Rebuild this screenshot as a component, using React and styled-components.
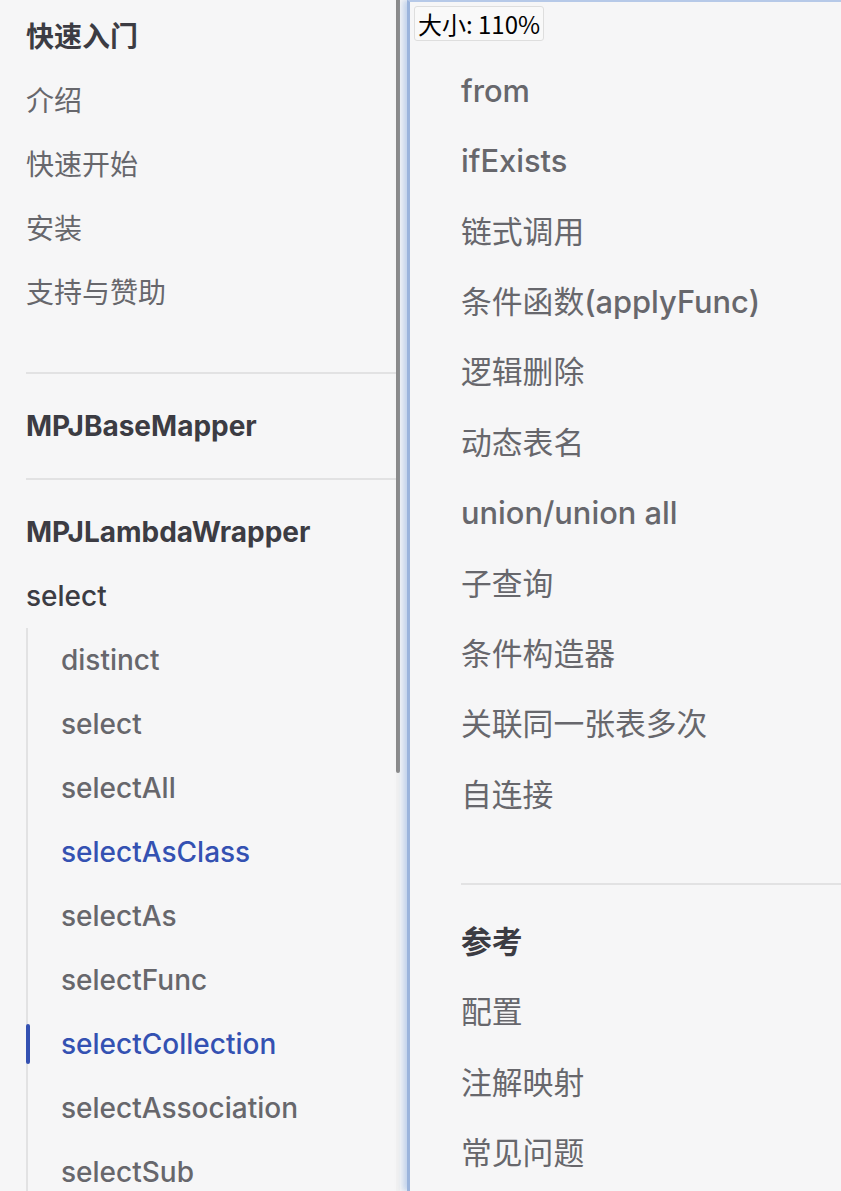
import React from "react";
import styled, { createGlobalStyle } from "styled-components";

const GlobalStyle = createGlobalStyle`
  html, body {
    margin: 0;
    padding: 0;
    background: #f6f6f7;
  }
  body {
    font-family: Inter, "Noto Sans CJK SC", sans-serif;
  }
`;

const quickStart = ["介绍", "快速开始", "安装", "支持与赞助"];

const selectChildren = [
  { text: "distinct" },
  { text: "select" },
  { text: "selectAll" },
  { text: "selectAsClass", highlight: true },
  { text: "selectAs" },
  { text: "selectFunc" },
  { text: "selectCollection", active: true },
  { text: "selectAssociation" },
  { text: "selectSub" },
];

const zoomedItems = [
  "from",
  "ifExists",
  "链式调用",
  "条件函数(applyFunc)",
  "逻辑删除",
  "动态表名",
  "union/union all",
  "子查询",
  "条件构造器",
  "关联同一张表多次",
  "自连接",
];

const referenceItems = ["配置", "注解映射", "常见问题"];

// the chinese glyphs render at regular weight, latin at medium
function Label({ text }) {
  const parts = text.split(/([\u4e00-\u9fff]+)/).filter(Boolean);
  return parts.map((p, i) => (/[\u4e00-\u9fff]/.test(p) ? <Han key={i}>{p}</Han> : <span key={i}>{p}</span>));
}

function App() {
  return (
    <>
      <GlobalStyle />
      <Page>
        <Sidebar>
          <Group pt="5px" pb="47px">
            <GroupTitle>快速入门</GroupTitle>
            {quickStart.map((t) => (
              <Item key={t}>
                <Label text={t} />
              </Item>
            ))}
          </Group>
          <Group divided pt="20px" pb="20px">
            <GroupTitle>MPJBaseMapper</GroupTitle>
          </Group>
          <Group divided pt="20px" pb="0px">
            <GroupTitle>MPJLambdaWrapper</GroupTitle>
            <Item strong>select</Item>
            <SubList>
              {selectChildren.map((c) => (
                <SubItem key={c.text} blue={c.highlight || c.active}>
                  {c.active && <Indicator />}
                  {c.text}
                </SubItem>
              ))}
            </SubList>
          </Group>
        </Sidebar>
        <ScrollTrack>
          <ScrollThumb />
        </ScrollTrack>
        <ZoomPanel>
          <SizeLabel>大小: 110%</SizeLabel>
          <ZoomGroup pt="54px" pb="53px">
            {zoomedItems.map((t) => (
              <ZoomItem key={t}>
                <Label text={t} />
              </ZoomItem>
            ))}
          </ZoomGroup>
          <ZoomGroup divided pt="22px" pb="0px">
            <ZoomTitle>参考</ZoomTitle>
            {referenceItems.map((t) => (
              <ZoomItem key={t}>
                <Label text={t} />
              </ZoomItem>
            ))}
          </ZoomGroup>
        </ZoomPanel>
      </Page>
    </>
  );
}

const Page = styled.div`
  display: flex;
  flex-direction: row;
  height: 1191px;
  overflow: hidden;
  background: #f6f6f7;
`;

const Sidebar = styled.div`
  width: 370px;
  flex-shrink: 0;
  padding-left: 26px;
  display: flex;
  flex-direction: column;
`;

const Group = styled.div`
  padding-top: ${(props) => props.pt};
  padding-bottom: ${(props) => props.pb};
  border-top: ${(props) => (props.divided ? "2px solid #e2e2e3" : "none")};
`;

const GroupTitle = styled.div`
  padding: 8px 0;
  line-height: 48px;
  font-size: 28px;
  font-weight: 700;
  color: #3c3c43;
  white-space: nowrap;
`;

const Item = styled.div`
  padding: 8px 0;
  line-height: 48px;
  font-size: 28px;
  font-weight: 500;
  color: ${(props) => (props.strong ? "#3c3c43" : "#67676c")};
  white-space: nowrap;
`;

const Han = styled.span`
  font-weight: 400;
`;

const SubList = styled.div`
  border-left: 2px solid #e2e2e3;
  padding-left: 33px;
`;

const SubItem = styled.div`
  position: relative;
  padding: 8px 0;
  line-height: 48px;
  font-size: 28px;
  font-weight: 500;
  color: ${(props) => (props.blue ? "#3451b2" : "#67676c")};
  white-space: nowrap;
`;

const Indicator = styled.span`
  position: absolute;
  left: -35px;
  top: 12px;
  bottom: 12px;
  width: 4px;
  border-radius: 2px;
  background: #3451b2;
`;

const ScrollTrack = styled.div`
  width: 4px;
  flex-shrink: 0;
  background: #f1f1f1;
`;

const ScrollThumb = styled.div`
  height: 773px;
  background: #8a8a8a;
  border-radius: 0 0 2px 2px;
`;

const ZoomPanel = styled.div`
  position: relative;
  flex: 1;
  min-width: 0;
  margin-left: 7px;
  padding-left: 51px;
  border-left: 3px solid #9bb4dc;
  border-top: 2px solid #b6c9e8;
  background: #f6f6f7;
  box-shadow: -4px 0 6px 0 rgba(150, 180, 225, 0.55);
`;

const SizeLabel = styled.div`
  position: absolute;
  top: 4px;
  left: 4px;
  padding: 0 3px;
  height: 33px;
  line-height: 33px;
  font-family: "Noto Sans CJK SC", "Liberation Sans", sans-serif;
  font-size: 24px;
  color: #000;
  background: #f9f9f9;
  border: 1px solid #dedede;
  border-radius: 3px;
  white-space: nowrap;
`;

const ZoomGroup = styled.div`
  padding-top: ${(props) => props.pt};
  padding-bottom: ${(props) => props.pb};
  border-top: ${(props) => (props.divided ? "2px solid #e2e2e3" : "none")};
`;

const ZoomItem = styled.div`
  padding: 8.8px 0;
  line-height: 52.8px;
  font-size: 30.8px;
  font-weight: 500;
  color: #67676c;
  white-space: nowrap;
`;

const ZoomTitle = styled(ZoomItem)`
  font-weight: 700;
  color: #3c3c43;
`;

export default App;
